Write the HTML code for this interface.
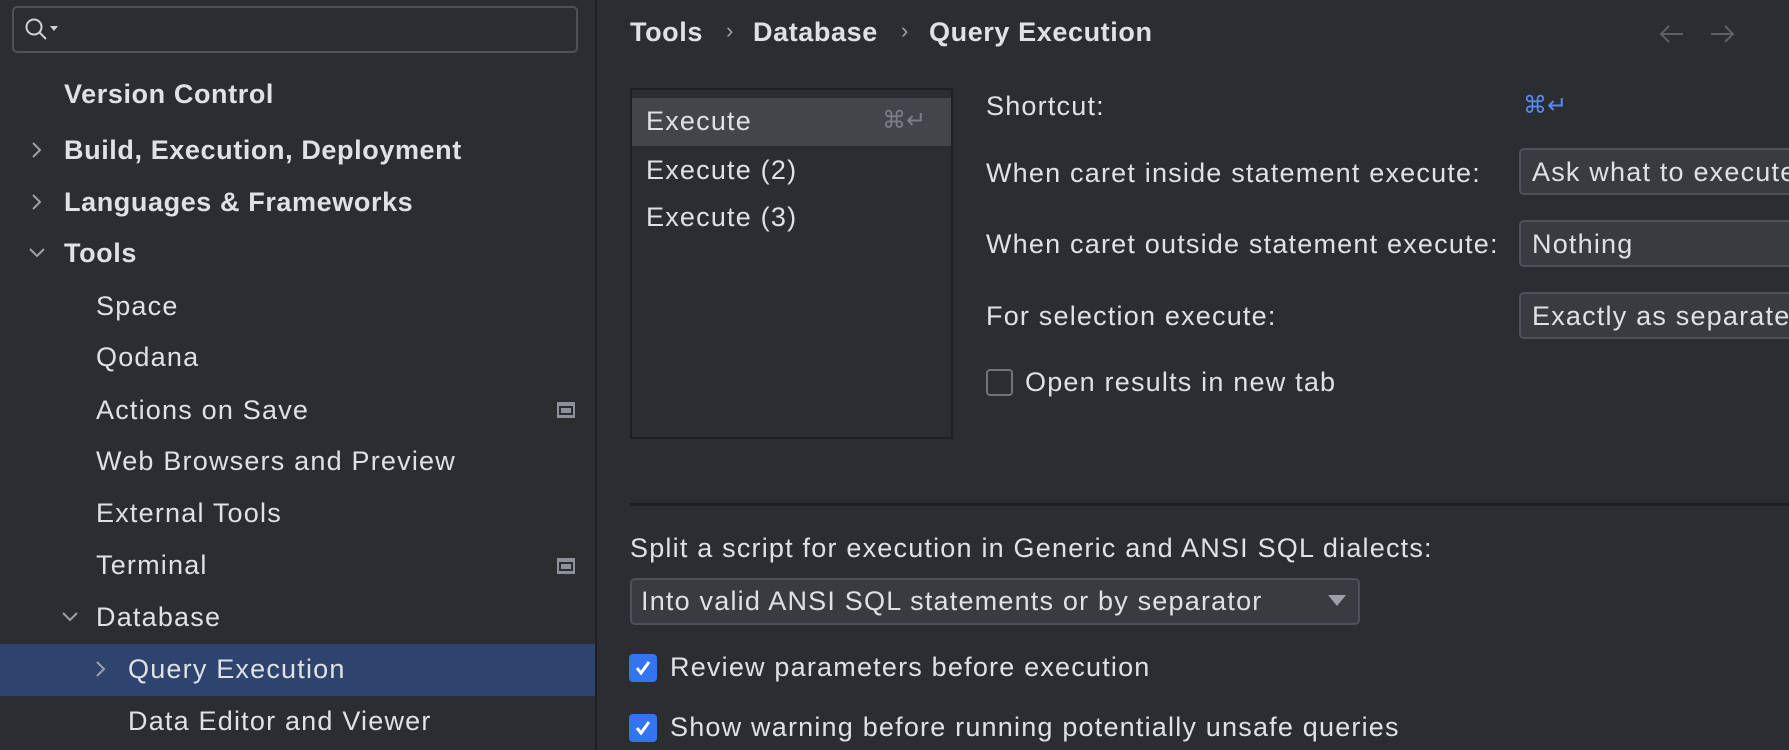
<!DOCTYPE html>
<html><head><meta charset="utf-8"><style>
*{margin:0;padding:0;box-sizing:border-box}
body{width:1789px;height:750px;background:#2b2d30;font-family:"Liberation Sans",sans-serif;color:#dfe1e5;position:relative;overflow:hidden;font-size:27px;letter-spacing:1.2px}
.a{position:absolute;white-space:nowrap;line-height:30px}
.b{font-weight:bold;letter-spacing:0.6px}
.side{position:absolute;left:0;top:0;width:595px;height:750px;background:#2b2d30}
.div{position:absolute;left:595px;top:0;width:2px;height:750px;background:#1e1f22}
.search{position:absolute;left:12px;top:6px;width:566px;height:47px;border:2px solid #4e5157;border-radius:5px}
.sel{position:absolute;left:0;top:644px;width:595px;height:52px;background:#2e436e}
.chev{position:absolute}
.box{position:absolute;left:630px;top:88px;width:323px;height:351px;border:2px solid #1e1f22}
.lsel{position:absolute;left:632px;top:98px;width:319px;height:48px;background:#43454a}
.combo{position:absolute;height:47px;border:2px solid #4e5157;border-radius:5px;background:#393b40}
.cb{position:absolute;width:28px;height:28px;border-radius:4px;background:#3574f0}
.sep{position:absolute;left:630px;top:503px;width:1159px;height:3px;background:#1e1f22}
</style></head><body>
<div class="side"></div>
<div class="div"></div>
<div class="search"></div>
<svg class="chev" style="left:22px;top:16px" width="40" height="28" viewBox="0 0 40 28"><circle cx="12" cy="11" r="7.5" fill="none" stroke="#ced0d6" stroke-width="2"/><line x1="17.5" y1="16.5" x2="24" y2="23" stroke="#ced0d6" stroke-width="2"/><path d="M28 10h8l-4 5z" fill="#ced0d6"/></svg>

<div class="sel"></div>
<div class="a b" style="left:64px;top:79px">Version Control</div>
<div class="a b" style="left:64px;top:135px">Build, Execution, Deployment</div>
<div class="a b" style="left:64px;top:187px">Languages &amp; Frameworks</div>
<div class="a b" style="left:64px;top:238px">Tools</div>
<div class="a" style="left:96px;top:291px">Space</div>
<div class="a" style="left:96px;top:342px">Qodana</div>
<div class="a" style="left:96px;top:395px">Actions on Save</div>
<div class="a" style="left:96px;top:446px">Web Browsers and Preview</div>
<div class="a" style="left:96px;top:498px">External Tools</div>
<div class="a" style="left:96px;top:550px">Terminal</div>
<div class="a" style="left:96px;top:602px">Database</div>
<div class="a" style="left:128px;top:654px">Query Execution</div>
<div class="a" style="left:128px;top:706px">Data Editor and Viewer</div>
<svg class="chev" style="left:30px;top:141px" width="14" height="18"><path d="M3 2l7 7-7 7" fill="none" stroke="#9da0a8" stroke-width="2"/></svg>
<svg class="chev" style="left:30px;top:193px" width="14" height="18"><path d="M3 2l7 7-7 7" fill="none" stroke="#9da0a8" stroke-width="2"/></svg>
<svg class="chev" style="left:28px;top:246px" width="18" height="14"><path d="M2 3l7 7 7-7" fill="none" stroke="#9da0a8" stroke-width="2"/></svg>
<svg class="chev" style="left:61px;top:610px" width="18" height="14"><path d="M2 3l7 7 7-7" fill="none" stroke="#9da0a8" stroke-width="2"/></svg>
<svg class="chev" style="left:94px;top:660px" width="14" height="18"><path d="M3 2l7 7-7 7" fill="none" stroke="#9da0a8" stroke-width="2"/></svg>
<svg class="chev" style="left:557px;top:402px" width="18" height="16"><rect x="0" y="0" width="18" height="16" fill="#8c9199"/><rect x="2" y="4" width="14" height="9" fill="#2b2d30"/><rect x="4" y="6" width="10" height="5" fill="#8c9199"/></svg>
<svg class="chev" style="left:557px;top:558px" width="18" height="16"><rect x="0" y="0" width="18" height="16" fill="#8c9199"/><rect x="2" y="4" width="14" height="9" fill="#2b2d30"/><rect x="4" y="6" width="10" height="5" fill="#8c9199"/></svg>

<div class="a b" style="left:630px;top:17px">Tools</div>
<div class="a" style="left:726px;top:16px;color:#a0a3aa;font-size:22px">›</div>
<div class="a b" style="left:753px;top:17px">Database</div>
<div class="a" style="left:901px;top:16px;color:#a0a3aa;font-size:22px">›</div>
<div class="a b" style="left:929px;top:17px">Query Execution</div>
<svg class="chev" style="left:1657px;top:22px" width="80" height="24"><path d="M4 12h22M12 4l-8 8 8 8" fill="none" stroke="#5d6066" stroke-width="2"/><path d="M54 12h22M68 4l8 8-8 8" fill="none" stroke="#5d6066" stroke-width="2"/></svg>

<div class="box"></div>
<div class="lsel"></div>
<div class="a" style="left:646px;top:106px">Execute</div>
<div class="a" style="left:882px;top:106px;color:#7a7e85;font-size:24px;letter-spacing:0">⌘↵</div>
<div class="a" style="left:646px;top:155px">Execute (2)</div>
<div class="a" style="left:646px;top:202px">Execute (3)</div>

<div class="a" style="left:986px;top:91px">Shortcut:</div>
<div class="a" style="left:1523px;top:91px;color:#548af7;font-size:24px;letter-spacing:0">⌘↵</div>
<div class="a" style="left:986px;top:158px">When caret inside statement execute:</div>
<div class="a" style="left:986px;top:229px">When caret outside statement execute:</div>
<div class="a" style="left:986px;top:301px">For selection execute:</div>
<div class="combo" style="left:1519px;top:148px;width:300px"></div>
<div class="combo" style="left:1519px;top:220px;width:300px"></div>
<div class="combo" style="left:1519px;top:292px;width:300px"></div>
<div class="a" style="left:1532px;top:157px">Ask what to execute</div>
<div class="a" style="left:1532px;top:229px">Nothing</div>
<div class="a" style="left:1532px;top:301px">Exactly as separate</div>
<div style="position:absolute;left:986px;top:369px;width:27px;height:27px;border:2px solid #6f737a;border-radius:4px"></div>
<div class="a" style="left:1025px;top:367px">Open results in new tab</div>

<div class="sep"></div>
<div class="a" style="left:630px;top:533px">Split a script for execution in Generic and ANSI SQL dialects:</div>
<div class="combo" style="left:630px;top:578px;width:730px"></div>
<div class="a" style="left:641px;top:586px">Into valid ANSI SQL statements or by separator</div>
<svg class="chev" style="left:1328px;top:595px" width="18" height="12"><path d="M0 0h18l-9 11z" fill="#9da0a8"/></svg>
<div class="cb" style="left:629px;top:654px"></div>
<svg class="chev" style="left:633px;top:658px" width="20" height="20"><path d="M4 10l4 5 8-11" fill="none" stroke="#fff" stroke-width="3"/></svg>
<div class="a" style="left:670px;top:652px">Review parameters before execution</div>
<div class="cb" style="left:629px;top:714px"></div>
<svg class="chev" style="left:633px;top:718px" width="20" height="20"><path d="M4 10l4 5 8-11" fill="none" stroke="#fff" stroke-width="3"/></svg>
<div class="a" style="left:670px;top:712px">Show warning before running potentially unsafe queries</div>
</body></html>
